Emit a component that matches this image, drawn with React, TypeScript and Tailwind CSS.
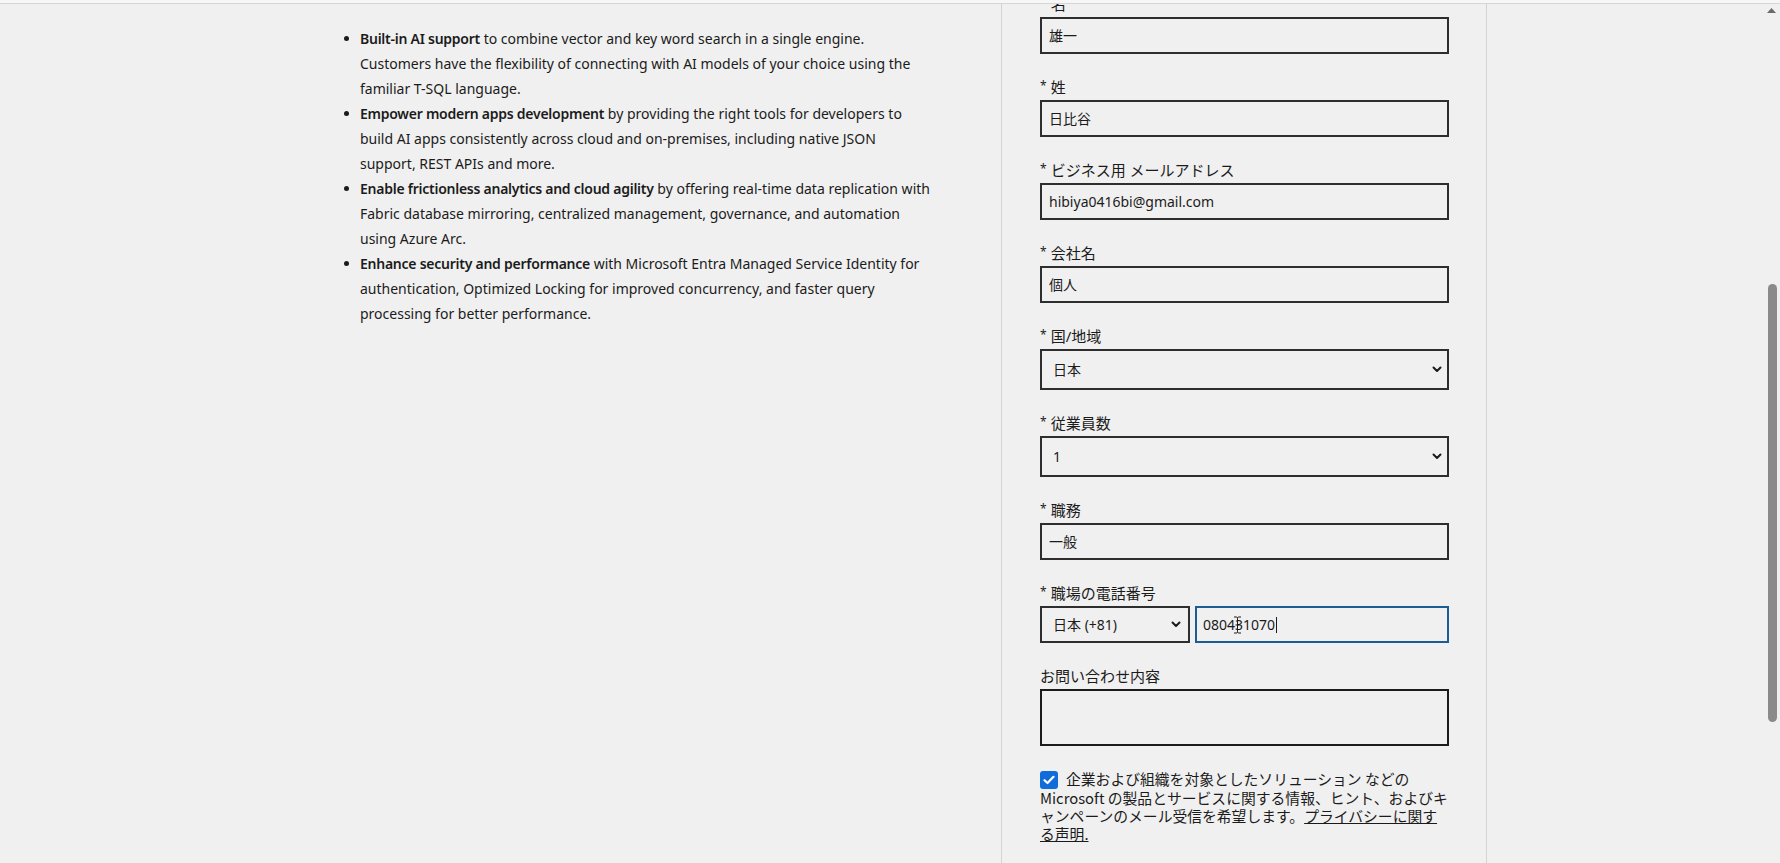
import React from "react";

const latin = "font-['Noto_Sans','Noto_Sans_CJK_JP',sans-serif]";

function Chevron({ className = "" }: { className?: string }) {
  return (
    <svg className={className} width="10" height="7" viewBox="0 0 10 7" fill="none">
      <path d="M1.5 1.5 L5 5 L8.5 1.5" stroke="#1b1b1b" strokeWidth="2" strokeLinecap="round" strokeLinejoin="round" />
    </svg>
  );
}

function Label({ children, req = true }: { children: React.ReactNode; req?: boolean }) {
  return (
    <div className="h-[22px] mb-[2px] flex items-center text-[15px] leading-[22px] text-[#1b1b1b] whitespace-nowrap overflow-visible">
      {req && <span className="text-[12px] leading-none mr-[4px] -mt-[2px]">*</span>}
      <span className="leading-none">{children}</span>
    </div>
  );
}

function TextInput({ value }: { value: string }) {
  return (
    <div className="h-[37px] border-2 border-[#2e2e2e] pl-[7px] flex items-center text-[14px] text-[#1b1b1b]">
      {value}
    </div>
  );
}

function SelectBox({ value }: { value: string }) {
  return (
    <div className="h-[41px] border-2 border-[#2e2e2e] pl-[11px] pr-[5px] flex items-center justify-between text-[14px] text-[#1b1b1b]">
      <span>{value}</span>
      <Chevron />
    </div>
  );
}

function Field({ label, children, req = true }: { label: string; children: React.ReactNode; req?: boolean }) {
  return (
    <div className="mb-[22px]">
      <Label req={req}>{label}</Label>
      {children}
    </div>
  );
}

function Bullet({ children }: { children: React.ReactNode }) {
  return (
    <li className="flex">
      <span className="w-[19px] shrink-0 flex pt-[10px] pl-[3px]">
        <span className="w-[5px] h-[5px] rounded-full bg-[#1b1b1b]" />
      </span>
      <div className="whitespace-nowrap">{children}</div>
    </li>
  );
}

function B({ children }: { children: React.ReactNode }) {
  return <b className="font-semibold tracking-[-0.25px]">{children}</b>;
}

export default function App() {
  return (
    <div className={`w-[1780px] h-[863px] bg-[#f0f0f0] overflow-hidden flex flex-col relative ${latin}`}>
      <div className="h-[4px] shrink-0 bg-[#f7f7f7] border-b border-[#d6d6d6] relative z-10" />
      <div className="flex flex-1 min-h-0">
        <div className="w-[1001px] shrink-0 pl-[341px] pt-[22px]">
          <ul className="text-[14px] leading-[25px] text-[#1b1b1b]">
            <Bullet>
              <B>Built-in AI support</B> to combine vector and key word search in a single engine.
              <br />
              Customers have the flexibility of connecting with AI models of your choice using the
              <br />
              familiar T-SQL language.
            </Bullet>
            <Bullet>
              <B>Empower modern apps development</B> by providing the right tools for developers to
              <br />
              build AI apps consistently across cloud and on-premises, including native JSON
              <br />
              support, REST APIs and more.
            </Bullet>
            <Bullet>
              <B>Enable frictionless analytics and cloud agility</B> by offering real-time data replication with
              <br />
              Fabric database mirroring, centralized management, governance, and automation
              <br />
              using Azure Arc.
            </Bullet>
            <Bullet>
              <B>Enhance security and performance</B> with Microsoft Entra Managed Service Identity for
              <br />
              authentication, Optimized Locking for improved concurrency, and faster query
              <br />
              processing for better performance.
            </Bullet>
          </ul>
        </div>

        <div className="w-[486px] shrink-0 border-l border-r border-[#d4d4d4] pl-[38px] pr-[37px]">
          <div className="-mt-[11px]">
            <Field label="名">
              <TextInput value="雄一" />
            </Field>
            <Field label="姓">
              <TextInput value="日比谷" />
            </Field>
            <Field label="ビジネス用 メールアドレス">
              <TextInput value="hibiya0416bi@gmail.com" />
            </Field>
            <Field label="会社名">
              <TextInput value="個人" />
            </Field>
            <Field label="国/地域">
              <SelectBox value="日本" />
            </Field>
            <Field label="従業員数">
              <SelectBox value="1" />
            </Field>
            <Field label="職務">
              <TextInput value="一般" />
            </Field>
            <Field label="職場の電話番号">
              <div className="flex gap-[5px]">
                <div className="w-[150px] h-[37px] border-2 border-[#2e2e2e] pl-[11px] pr-[7px] flex items-center justify-between text-[14px] text-[#1b1b1b]">
                  <span>日本 (+81)</span>
                  <Chevron />
                </div>
                <div className="flex-1 h-[37px] border-2 border-[#1d5b94] pl-[6px] flex items-center text-[14px] text-[#1b1b1b] relative">
                  <span>080431070</span>
                  <span className="w-[1px] h-[16px] bg-[#1b1b1b] ml-[1px]" />
                  <svg className="absolute left-[36px] top-[8px]" width="9" height="18" viewBox="0 0 9 18" fill="none">
                    <path d="M1 1 H3.5 Q4.5 1 4.5 2.5 V15.5 Q4.5 17 3.5 17 H1 M8 1 H5.5 Q4.5 1 4.5 2.5 M4.5 15.5 Q4.5 17 5.5 17 H8 M2.5 9 H6.5" stroke="#1b1b1b" strokeWidth="1" />
                  </svg>
                </div>
              </div>
            </Field>
            <div className="mb-[24px]">
              <Label req={false}>お問い合わせ内容</Label>
              <div className="h-[57px] border-2 border-[#1b1b1b]" />
            </div>
            <div className="text-[14.8px] text-[#1b1b1b] font-['Noto_Sans_CJK_JP','Noto_Sans',sans-serif] whitespace-nowrap">
              <div className="h-[19px] flex items-center">
                <span className="w-[18px] h-[18px] shrink-0 rounded-[3px] bg-[#0f6cd8] flex items-center justify-center mr-[8px]">
                  <svg width="12" height="10" viewBox="0 0 12 10" fill="none">
                    <path d="M1.5 5.2 L4.5 8 L10.5 1.8" stroke="white" strokeWidth="2.2" strokeLinecap="round" strokeLinejoin="round" />
                  </svg>
                </span>
                <span className="leading-none">企業および組織を対象としたソリューション などの</span>
              </div>
              <div className="h-[18px] flex items-center">
                <span className="leading-none">Microsoft の製品とサービスに関する情報、ヒント、およびキ</span>
              </div>
              <div className="h-[18px] flex items-center">
                <span className="leading-none">
                  ャンペーンのメール受信を希望します。<span className="underline">プライバシーに関す</span>
                </span>
              </div>
              <div className="h-[18px] flex items-center">
                <span className="leading-none underline">る声明.</span>
              </div>
            </div>
          </div>
        </div>
      </div>

      <div className="absolute right-[3px] top-[284px] w-[9px] h-[438px] rounded-full bg-[#8a8a8a]" />
      <svg className="absolute right-[4px] top-[8px]" width="9" height="5" viewBox="0 0 9 5">
        <path d="M0 5 L4.5 0 L9 5 Z" fill="#6b6b6b" />
      </svg>
    </div>
  );
}
